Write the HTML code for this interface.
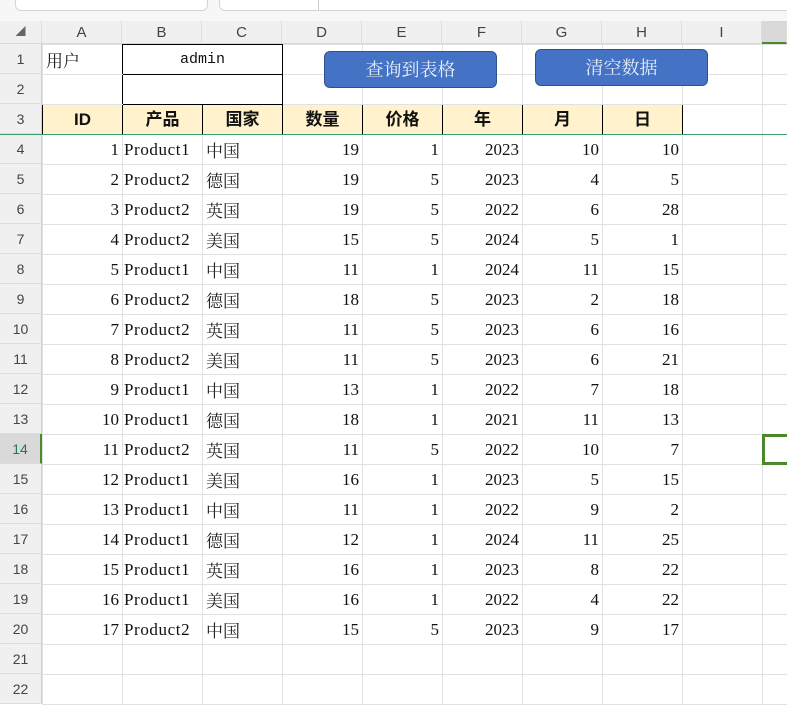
<!DOCTYPE html>
<html><head><meta charset="utf-8"><style>
*{box-sizing:border-box;margin:0;padding:0}
body{width:787px;height:693px;overflow:hidden;background:#fff;position:relative;font-family:"Liberation Serif","Noto Serif CJK SC",serif}
.top{position:absolute;left:0;top:0;width:787px;height:21px;background:#f7f7f7}
.box{position:absolute;top:-4px;height:15px;background:#fff;border:1px solid #d4d4d4;border-radius:0 0 6px 6px}
.hdr{position:absolute;top:21px;left:0;width:787px;height:23px;background:#f0f0f0;border-bottom:1px solid #d8d8d8}
.ch{position:absolute;top:0;height:23px;text-align:center;font:15px "Liberation Sans","Noto Sans CJK SC",sans-serif;line-height:23px;color:#444;border-right:1px solid #dcdcdc}
.rh{position:absolute;left:0;width:42px;height:30px;text-align:center;background:#f0f0f0;border-bottom:1px solid #dcdcdc;border-right:1px solid #d0d0d0;font:14px "Liberation Sans",sans-serif;line-height:30px;color:#444}
table{position:absolute;left:42px;top:44px;border-collapse:collapse;table-layout:fixed;width:800px}
td{height:30px;border:1px solid #e1e1e1;font-size:17px;padding:0 3px;white-space:nowrap;overflow:hidden;text-align:right;color:#111;line-height:28px}
td.p{text-align:left;font-family:"Liberation Serif",serif;font-size:17px;letter-spacing:0.6px;padding:0 1px}
td.c{text-align:left;font-family:"Noto Serif CJK SC",serif;font-size:17px;color:#222}
tr.h td{background:#fff2cc;border:1px solid #000;text-align:center;font:bold 17px "Liberation Sans","Noto Sans CJK SC",sans-serif;line-height:28px}
tr.h td.n{background:#fff;border-color:#e1e1e1;border-top-color:#000}
.btn{position:absolute;background:#4472c4;border:1px solid #2f528f;border-radius:6px;color:#e8eef8;font:18px "Noto Serif CJK SC",serif;line-height:35px;text-align:center}
</style></head><body>
<div class="top"><div class="box" style="left:15px;width:193px"></div><div class="box" style="left:219px;width:110px"></div><div class="box" style="left:318px;width:480px;border-radius:0;border-left:1px solid #ccc;border-top:none;border-right:none"></div></div>
<div class="hdr">
<div class="ch" style="left:0;width:42px;font-size:10px;color:#666">◢</div>
<div class="ch" style="left:42px;width:80px">A</div><div class="ch" style="left:122px;width:80px">B</div><div class="ch" style="left:202px;width:80px">C</div><div class="ch" style="left:282px;width:80px">D</div><div class="ch" style="left:362px;width:80px">E</div><div class="ch" style="left:442px;width:80px">F</div><div class="ch" style="left:522px;width:80px">G</div><div class="ch" style="left:602px;width:80px">H</div><div class="ch" style="left:682px;width:80px">I</div><div class="ch" style="left:762px;width:25px;background:#d9d9d9;border-bottom:2px solid #4a8a2a"></div>
</div>
<div class="rh" style="top:44px">1</div><div class="rh" style="top:74px">2</div><div class="rh" style="top:104px">3</div><div class="rh" style="top:134px">4</div><div class="rh" style="top:164px">5</div><div class="rh" style="top:194px">6</div><div class="rh" style="top:224px">7</div><div class="rh" style="top:254px">8</div><div class="rh" style="top:284px">9</div><div class="rh" style="top:314px">10</div><div class="rh" style="top:344px">11</div><div class="rh" style="top:374px">12</div><div class="rh" style="top:404px">13</div><div class="rh" style="top:434px;background:#d9d9d9;color:#1e7a55;border-right:2px solid #4a8a2a">14</div><div class="rh" style="top:464px">15</div><div class="rh" style="top:494px">16</div><div class="rh" style="top:524px">17</div><div class="rh" style="top:554px">18</div><div class="rh" style="top:584px">19</div><div class="rh" style="top:614px">20</div><div class="rh" style="top:644px">21</div><div class="rh" style="top:674px">22</div>
<table>
<colgroup><col style="width:80px"><col style="width:80px"><col style="width:80px"><col style="width:80px"><col style="width:80px"><col style="width:80px"><col style="width:80px"><col style="width:80px"><col style="width:80px"><col style="width:80px"></colgroup>
<tr><td class="c" style="border-right:1px solid #000">用户</td><td colspan="2" style="text-align:center;font-family:'Liberation Mono',monospace;font-size:15px;border:1px solid #000">admin</td><td style="border-left:1px solid #000"></td><td></td><td></td><td></td><td></td><td></td><td></td></tr>
<tr><td style="border-right:1px solid #000"></td><td colspan="2" style="border:1px solid #000"></td><td style="border-left:1px solid #000"></td><td></td><td></td><td></td><td></td><td></td><td></td></tr>
<tr class="h"><td>ID</td><td>产品</td><td>国家</td><td>数量</td><td>价格</td><td>年</td><td>月</td><td>日</td><td class="n"></td><td class="n"></td></tr>
<tr><td>1</td><td class="p">Product1</td><td class="c">中国</td><td>19</td><td>1</td><td>2023</td><td>10</td><td>10</td><td></td><td></td></tr>
<tr><td>2</td><td class="p">Product2</td><td class="c">德国</td><td>19</td><td>5</td><td>2023</td><td>4</td><td>5</td><td></td><td></td></tr>
<tr><td>3</td><td class="p">Product2</td><td class="c">英国</td><td>19</td><td>5</td><td>2022</td><td>6</td><td>28</td><td></td><td></td></tr>
<tr><td>4</td><td class="p">Product2</td><td class="c">美国</td><td>15</td><td>5</td><td>2024</td><td>5</td><td>1</td><td></td><td></td></tr>
<tr><td>5</td><td class="p">Product1</td><td class="c">中国</td><td>11</td><td>1</td><td>2024</td><td>11</td><td>15</td><td></td><td></td></tr>
<tr><td>6</td><td class="p">Product2</td><td class="c">德国</td><td>18</td><td>5</td><td>2023</td><td>2</td><td>18</td><td></td><td></td></tr>
<tr><td>7</td><td class="p">Product2</td><td class="c">英国</td><td>11</td><td>5</td><td>2023</td><td>6</td><td>16</td><td></td><td></td></tr>
<tr><td>8</td><td class="p">Product2</td><td class="c">美国</td><td>11</td><td>5</td><td>2023</td><td>6</td><td>21</td><td></td><td></td></tr>
<tr><td>9</td><td class="p">Product1</td><td class="c">中国</td><td>13</td><td>1</td><td>2022</td><td>7</td><td>18</td><td></td><td></td></tr>
<tr><td>10</td><td class="p">Product1</td><td class="c">德国</td><td>18</td><td>1</td><td>2021</td><td>11</td><td>13</td><td></td><td></td></tr>
<tr><td>11</td><td class="p">Product2</td><td class="c">英国</td><td>11</td><td>5</td><td>2022</td><td>10</td><td>7</td><td></td><td></td></tr>
<tr><td>12</td><td class="p">Product1</td><td class="c">美国</td><td>16</td><td>1</td><td>2023</td><td>5</td><td>15</td><td></td><td></td></tr>
<tr><td>13</td><td class="p">Product1</td><td class="c">中国</td><td>11</td><td>1</td><td>2022</td><td>9</td><td>2</td><td></td><td></td></tr>
<tr><td>14</td><td class="p">Product1</td><td class="c">德国</td><td>12</td><td>1</td><td>2024</td><td>11</td><td>25</td><td></td><td></td></tr>
<tr><td>15</td><td class="p">Product1</td><td class="c">英国</td><td>16</td><td>1</td><td>2023</td><td>8</td><td>22</td><td></td><td></td></tr>
<tr><td>16</td><td class="p">Product1</td><td class="c">美国</td><td>16</td><td>1</td><td>2022</td><td>4</td><td>22</td><td></td><td></td></tr>
<tr><td>17</td><td class="p">Product2</td><td class="c">中国</td><td>15</td><td>5</td><td>2023</td><td>9</td><td>17</td><td></td><td></td></tr>
<tr><td></td><td></td><td></td><td></td><td></td><td></td><td></td><td></td><td></td><td></td></tr>
<tr><td></td><td></td><td></td><td></td><td></td><td></td><td></td><td></td><td></td><td></td></tr>
</table>
<div style="position:absolute;left:0;top:134px;width:787px;height:1px;background:#3aa070"></div>
<div style="position:absolute;left:762px;top:434px;width:30px;height:31px;border:3px solid #4a8a2a"></div>
<div class="btn" style="left:324px;top:51px;width:173px;height:37px">查询到表格</div>
<div class="btn" style="left:535px;top:49px;width:173px;height:37px">清空数据</div>
</body></html>
